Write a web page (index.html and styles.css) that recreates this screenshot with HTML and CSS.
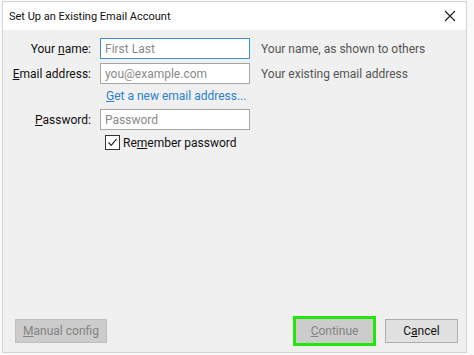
FILE: index.html
```html
<!DOCTYPE html>
<html lang="en">
<head>
    <meta charset="UTF-8">
    <meta name="viewport" content="width=device-width, initial-scale=1.0">
    <title>Set Up an Existing Email Account</title>
    <link rel="stylesheet" href="styles.css">
</head>
<body>

<div class="dialog">
    <div class="titlebar">
        <span class="title">Set Up an Existing Email Account</span>
        <svg class="close" width="12" height="12" viewBox="0 0 12 12">
            <path d="M1 1 L11 11 M11 1 L1 11" stroke="#222" stroke-width="1.2" fill="none"/>
        </svg>
    </div>

    <div class="content">
        <form class="account-form">
            <label class="field-label" for="name">Your <u>n</u>ame:</label>
            <input class="field focused" type="text" id="name" placeholder="First Last">
            <span class="hint">Your name, as shown to others</span>

            <label class="field-label" for="email"><u>E</u>mail address:</label>
            <input class="field" type="email" id="email" placeholder="you@example.com">
            <span class="hint">Your existing email address</span>

            <span></span>
            <a class="new-address" href="#"><u>G</u>et a new email address...</a>

            <label class="field-label" for="password"><u>P</u>assword:</label>
            <input class="field" type="password" id="password" placeholder="Password">
            <span></span>

            <span></span>
            <label class="remember">
                <span class="checkbox">
                    <svg width="13" height="13" viewBox="0 0 13 13">
                        <path d="M2.5 6.5 L5.2 9.3 L10.5 3.2" stroke="#222" stroke-width="1.2" fill="none"/>
                    </svg>
                </span>
                <span>Re<u>m</u>ember password</span>
            </label>
        </form>

        <div class="buttons">
            <button class="btn disabled manual" type="button"><u>M</u>anual config</button>
            <div class="spacer"></div>
            <span class="highlight">
                <button class="btn disabled" type="button"><u>C</u>ontinue</button>
            </span>
            <button class="btn" type="button">C<u>a</u>ncel</button>
        </div>
    </div>
</div>

</body>
</html>
```

FILE: styles.css
```css
body {
    margin: 0;
    background-color: #fafafa;
    font-family: Roboto, "Noto Sans", sans-serif;
    font-size: 12px;
    color: #1a1a1a;
}

.dialog {
    margin-left: 2px;
    margin-top: 1px;
    width: 465px;
    height: 352px;
    border: 1px solid #d4d4d4;
    display: flex;
    flex-direction: column;
    box-sizing: border-box;
}

.titlebar {
    height: 28px;
    background: white;
    display: flex;
    align-items: center;
    justify-content: space-between;
    padding: 0 10px 0 6px;
}

.title {
    font-size: 11px;
    color: #111;
}

.content {
    flex: 1;
    background-color: #f0f0f0;
    display: flex;
    flex-direction: column;
    justify-content: space-between;
    padding: 8px 0 6px 0;
}

.account-form {
    display: grid;
    grid-template-columns: 88px 150px 1fr;
    column-gap: 9px;
    row-gap: 4px;
    align-items: center;
}

.field-label {
    text-align: right;
    color: #111;
}

.field {
    height: 21px;
    box-sizing: border-box;
    border: 1px solid #a6a6a6;
    background: white;
    padding: 0 4px;
    font-family: inherit;
    font-size: 12px;
    outline: none;
}

.field::placeholder {
    color: #8a8a8a;
}

.field.focused {
    border-color: #3d8fd6;
}

.hint {
    margin-left: 2px;
    color: #555;
}

.new-address {
    grid-column: 2 / 4;
    white-space: nowrap;
    color: #2c7fd2;
    text-decoration: none;
    padding-left: 6px;
    height: 17px;
    line-height: 17px;
}

.remember {
    grid-column: 2 / 4;
    display: flex;
    align-items: center;
    gap: 3px;
    height: 17px;
    padding-left: 5px;
    color: #111;
}

.checkbox {
    width: 13px;
    height: 13px;
    border: 1px solid #333;
    background: white;
    display: flex;
}

.buttons {
    display: flex;
    align-items: center;
    padding: 0 8px 0 12px;
    gap: 9px;
}

.spacer {
    flex: 1;
}

.btn {
    height: 24px;
    padding: 0 10px;
    font-family: inherit;
    font-size: 12px;
    white-space: nowrap;
    color: #111;
    background: #e1e1e1;
    border: 1px solid #adadad;
    min-width: 73px;
}

.btn.disabled {
    color: #838383;
    background: #cccccc;
    border-color: #bfbfbf;
}

.btn.manual {
    width: 92px;
    padding: 0;
}

.highlight {
    display: flex;
    border: 3px solid #22e60c;
}

.highlight .btn {
    width: 77px;
    border-color: #cccccc;
}
```
